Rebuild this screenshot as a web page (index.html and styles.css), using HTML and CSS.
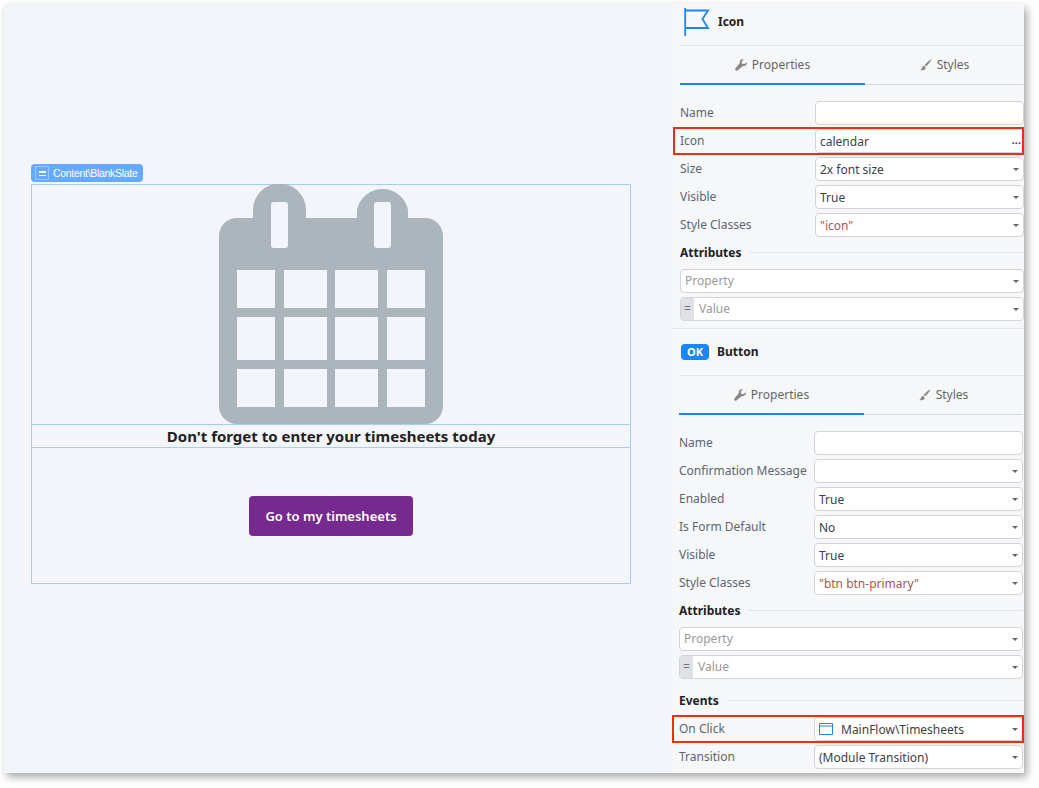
FILE: index.html
```html
<!DOCTYPE html>
<html>
<head>
  <title>Page Editor</title>
  <link rel="stylesheet" href="styles.css">
</head>
<body>
  <div class="window">
    <div class="canvas">
      <div class="widget-label">
        <span class="widget-label-icon"><span class="widget-label-dash"></span></span>
        <span>Content\BlankSlate</span>
      </div>
      <div class="blank-slate">
        <svg class="calendar" viewBox="0 0 224 240">
          <path fill-rule="evenodd" d="M34 34V26A26 26 0 0 1 87 26V34H138V26A26 26 0 0 1 189 26V34H206A18 18 0 0 1 224 52V222A18 18 0 0 1 206 240H18A18 18 0 0 1 0 222V52A18 18 0 0 1 18 34ZM55 18A3 3 0 0 0 52 21V61A3 3 0 0 0 55 64H66A3 3 0 0 0 69 61V21A3 3 0 0 0 66 18ZM158 18A3 3 0 0 0 155 21V61A3 3 0 0 0 158 64H169A3 3 0 0 0 172 61V21A3 3 0 0 0 169 18ZM18 86V124H56V86ZM65 86V124H108V86ZM116 86V124H159V86ZM168 86V124H206V86ZM18 133V176H56V133ZM65 133V176H108V133ZM116 133V176H159V133ZM168 133V176H206V133ZM18 185V223H56V185ZM65 185V223H108V185ZM116 185V223H159V185ZM168 185V223H206V185Z"/>
        </svg>
        <div class="slate-title">Don't forget to enter your timesheets today</div>
        <div class="slate-action">
          <button class="primary-button">Go to my timesheets</button>
        </div>
      </div>
    </div>

    <div class="panel">
      <div class="section">
        <div class="section-header">
          <svg class="flag-icon" viewBox="0 0 26 30">
            <path d="M1.200 0V28M1.200 2.500H24L18.500 11L24 20H1.200"/>
          </svg>
          <span class="section-name">Icon</span>
        </div>
        <div class="tabs">
          <div class="tab active">
            <svg class="tab-icon" viewBox="0 0 12 12"><path d="M11.600 3.200 9.400 5.300 7.200 4.800 6.700 2.600 8.800.4C7.200-.2 5.400.5 4.900 2.100c-.2.600-.2 1.200 0 1.800L.4 9.400c-.5.600-.4 1.400.1 1.900.5.5 1.300.6 1.900.1l5.500-4.500c1.600.5 3.300-.3 3.800-1.900.2-.6.1-1.200-.1-1.800Z"/></svg>
            Properties
          </div>
          <div class="tab">
            <svg class="tab-icon" viewBox="0 0 12 12"><path d="M11.700.3C9.500 1.300 6.600 3.600 4.700 6.100l1.300 1.200C8.400 5.400 10.800 2.500 11.700.3ZM3.800 6.800C2.300 7.100 2.200 8.300 1.800 9.500 1.600 10.100 1 10.600.3 10.800c1.500.8 3.600.7 4.700-.3.800-.8.800-1.800.3-2.500Z"/></svg>
            Styles
          </div>
        </div>
        <div class="fields">
          <div class="field"><label>Name</label><div class="control"></div></div>
          <div class="field marked"><label>Icon</label><div class="control">calendar<span class="more">...</span></div></div>
          <div class="field"><label>Size</label><div class="control select">2x font size</div></div>
          <div class="field"><label>Visible</label><div class="control select">True</div></div>
          <div class="field"><label>Style Classes</label><div class="control select string">"icon"</div></div>
          <div class="group-title">Attributes</div>
          <div class="wide"><div class="control select placeholder">Property</div></div>
          <div class="wide"><div class="control select placeholder with-addon"><span class="addon">=</span>Value</div></div>
        </div>
      </div>

      <div class="section second">
        <div class="section-header">
          <span class="ok-badge">OK</span>
          <span class="section-name">Button</span>
        </div>
        <div class="tabs">
          <div class="tab active">
            <svg class="tab-icon" viewBox="0 0 12 12"><path d="M11.600 3.200 9.400 5.300 7.200 4.800 6.700 2.600 8.800.4C7.200-.2 5.400.5 4.900 2.100c-.2.600-.2 1.200 0 1.800L.4 9.400c-.5.600-.4 1.400.1 1.900.5.5 1.300.6 1.900.1l5.500-4.500c1.600.5 3.300-.3 3.800-1.900.2-.6.1-1.200-.1-1.800Z"/></svg>
            Properties
          </div>
          <div class="tab">
            <svg class="tab-icon" viewBox="0 0 12 12"><path d="M11.700.3C9.500 1.300 6.600 3.600 4.700 6.100l1.300 1.200C8.400 5.400 10.800 2.500 11.700.3ZM3.800 6.800C2.300 7.100 2.200 8.300 1.800 9.500 1.600 10.100 1 10.600.3 10.800c1.500.8 3.600.7 4.700-.3.800-.8.800-1.800.3-2.500Z"/></svg>
            Styles
          </div>
        </div>
        <div class="fields">
          <div class="field"><label>Name</label><div class="control"></div></div>
          <div class="field"><label>Confirmation Message</label><div class="control select"></div></div>
          <div class="field"><label>Enabled</label><div class="control select">True</div></div>
          <div class="field"><label>Is Form Default</label><div class="control select">No</div></div>
          <div class="field"><label>Visible</label><div class="control select">True</div></div>
          <div class="field"><label>Style Classes</label><div class="control select string">"btn btn-primary"</div></div>
          <div class="group-title">Attributes</div>
          <div class="wide"><div class="control select placeholder">Property</div></div>
          <div class="wide"><div class="control select placeholder with-addon"><span class="addon">=</span>Value</div></div>
          <div class="group-title events">Events</div>
          <div class="field marked">
            <label>On Click</label>
            <div class="control select">
              <svg class="screen-icon" viewBox="0 0 14 12"><path d="M.5.500H13.500V11.500H.5ZM.5 3H13.500"/></svg>
              MainFlow\Timesheets
            </div>
          </div>
          <div class="field"><label>Transition</label><div class="control select">(Module Transition)</div></div>
        </div>
      </div>
    </div>
  </div>
</body>
</html>
```

FILE: styles.css
```css
body {
  margin: 0;
  width: 1039px;
  height: 788px;
  overflow: hidden;
  background: #ffffff;
  font-family: "Noto Sans", sans-serif;
  font-size: 12px;
  color: #333;
}

.window {
  display: flex;
  width: 1020px;
  height: 769px;
  margin: 4px 0 0 4px;
  background: #f2f5f9;
  box-shadow: 3px 4px 8px rgba(0, 0, 0, 0.35);
}

.canvas {
  width: 668px;
  padding: 160px 0 0 27px;
  box-sizing: border-box;
}

.widget-label {
  display: flex;
  align-items: center;
  gap: 4px;
  width: 112px;
  height: 18px;
  margin-bottom: 2px;
  padding-left: 4px;
  box-sizing: border-box;
  background: #66aaff;
  border-radius: 4px;
  color: #fff;
  font-family: "Liberation Sans", sans-serif;
  font-size: 10.5px;
  letter-spacing: -0.3px;
}

.widget-label-icon {
  display: flex;
  align-items: center;
  justify-content: center;
  width: 12px;
  height: 12px;
  border: 1px solid #9cc8ff;
}

.widget-label-dash {
  width: 7px;
  height: 5px;
  border-top: 2px solid #fff;
  border-bottom: 1px solid #fff;
  box-sizing: border-box;
}

.blank-slate {
  display: flex;
  flex-direction: column;
  width: 600px;
  height: 400px;
  box-sizing: border-box;
  border: 1px solid #a8cdf5;
}

.calendar {
  display: block;
  flex: none;
  width: 224px;
  height: 240px;
  margin: -1px 0 0 187px;
  fill: #adb5bc;
}

.slate-title {
  height: 22px;
  border-top: 1px solid #a8cdf5;
  border-bottom: 1px solid #a8cdf5;
  font-size: 15px;
  font-weight: 700;
  line-height: 22px;
  text-align: center;
  color: #222;
}

.slate-action {
  flex: 1;
  display: flex;
  align-items: center;
  justify-content: center;
}

.primary-button {
  width: 164px;
  height: 40px;
  border: none;
  border-radius: 4px;
  background: #762a90;
  color: #fff;
  font-family: "Noto Sans", sans-serif;
  font-size: 13px;
  font-weight: 600;
}

.panel {
  width: 352px;
  background: #f6f7f9;
}

.section {
  padding-left: 8px;
}

.section.second {
  padding-left: 7px;
  border-top: 1px solid #e2e4e7;
  margin-top: 7px;
}

.section-header {
  display: flex;
  align-items: center;
  height: 35px;
  padding-bottom: 6px;
  border-bottom: 1px solid #e2e4e7;
}

.section.second .section-header {
  height: 46px;
  padding-bottom: 0;
  margin-right: 1px;
}

.flag-icon {
  width: 26px;
  height: 30px;
  margin: 3px 8px 0 4px;
  fill: none;
  stroke: #1b86f5;
  stroke-width: 1.8;
}

.section-name {
  font-weight: 700;
  color: #222;
}

.section.second .section-name {
  padding-bottom: 2px;
}

.ok-badge {
  width: 28px;
  height: 16px;
  margin: 0 8px 0 2px;
  border-radius: 4px;
  background: #1b86f5;
  color: #fff;
  font-size: 11px;
  font-weight: 700;
  line-height: 16px;
  text-align: center;
}

.tabs {
  display: flex;
  height: 39px;
  border-bottom: 1px solid #d8dadd;
  box-sizing: border-box;
}

.section.second .tabs {
  margin-right: 1px;
}

.tab {
  flex: 1;
  display: flex;
  align-items: center;
  justify-content: center;
  gap: 5px;
  color: #666;
  margin-bottom: -1px;
  border-bottom: 2px solid transparent;
}

.tab.active {
  flex: none;
  width: 185px;
  border-bottom-color: #1b86f5;
}

.tab-icon {
  width: 12px;
  height: 12px;
  fill: #888;
}

.fields {
  display: flex;
  flex-direction: column;
  gap: 4px;
  padding-top: 16px;
}

.section.second .fields {
  margin-right: 1px;
}

.field {
  position: relative;
  display: grid;
  grid-template-columns: 135px 1fr;
  align-items: center;
  height: 24px;
}

.field label {
  padding-bottom: 2px;
  color: #5d6670;
  white-space: nowrap;
}

.field.marked::after {
  content: "";
  position: absolute;
  inset: -2px 0 -2px -7px;
  border: 2px solid #ee2f0c;
  pointer-events: none;
}

.section.second .field.marked::after {
  right: -1px;
}

.wide {
  height: 24px;
}

.control {
  position: relative;
  display: flex;
  align-items: center;
  height: 24px;
  padding-left: 4px;
  box-sizing: border-box;
  background: #fff;
  border: 1px solid #d2d4d8;
  border-radius: 4px;
  color: #3a3f45;
}

.control.select::after {
  content: "";
  position: absolute;
  right: 4px;
  top: 10px;
  border-top: 3px solid #666;
  border-left: 3px solid transparent;
  border-right: 3px solid transparent;
}

.control.string {
  color: #a5574e;
}

.control.placeholder {
  padding-bottom: 2px;
  color: #999;
}

.control.with-addon {
  padding-left: 0;
}

.addon {
  align-self: stretch;
  width: 13px;
  margin-right: 5px;
  margin-bottom: -2px;
  background: #dfe1e4;
  border-radius: 3px 0 0 3px;
  color: #777;
  line-height: 22px;
  text-align: center;
}

.more {
  position: absolute;
  right: 2px;
  top: 2px;
  color: #444;
  font-weight: 700;
  font-size: 11px;
}

.screen-icon {
  width: 14px;
  height: 12px;
  margin-right: 8px;
  fill: none;
  stroke: #1b86f5;
}

.group-title {
  display: flex;
  align-items: center;
  gap: 8px;
  height: 24px;
  padding-bottom: 2px;
  box-sizing: border-box;
  font-weight: 700;
  color: #222;
}

.group-title::after {
  content: "";
  flex: 1;
  height: 1px;
  background: #e2e4e7;
}

.group-title.events {
  margin-top: 6px;
}
```
